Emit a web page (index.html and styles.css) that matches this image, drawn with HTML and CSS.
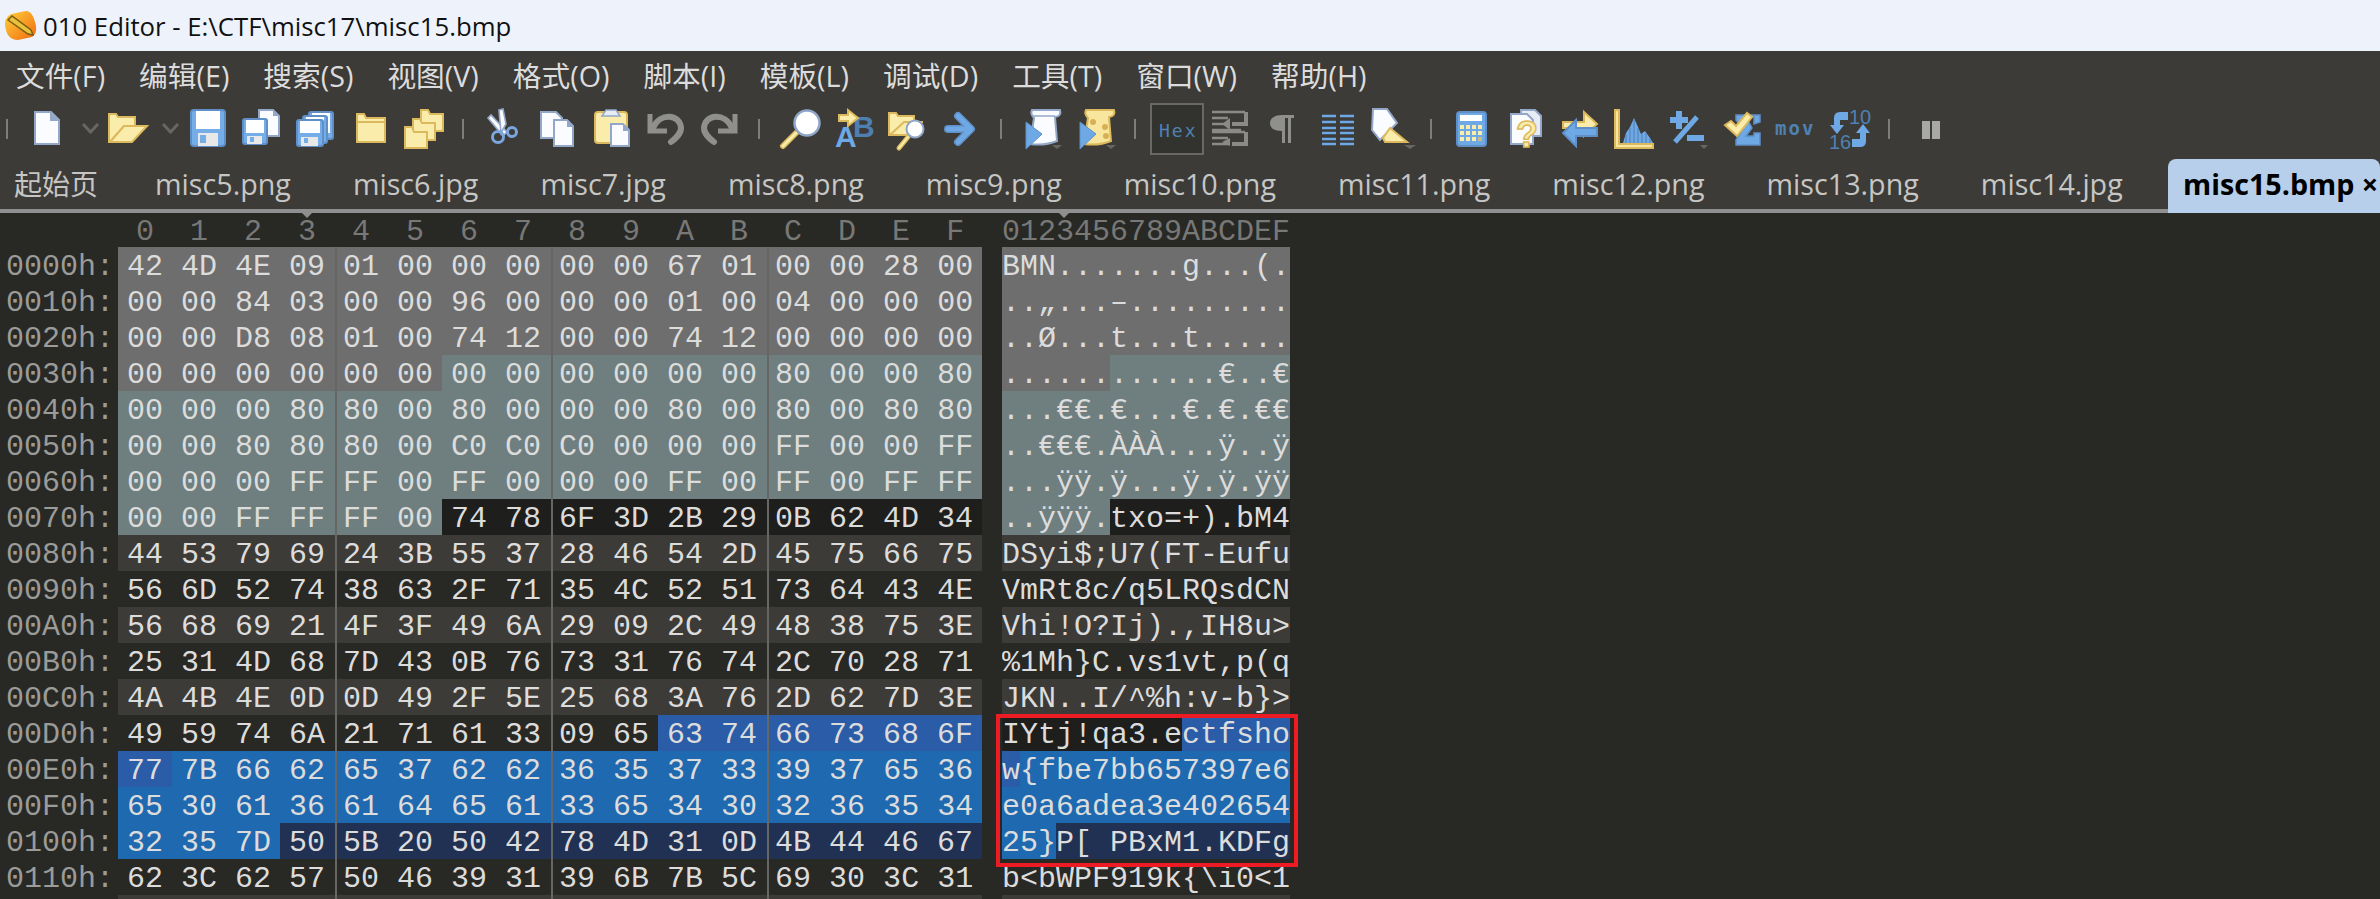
FILE: index.html
```html
<!DOCTYPE html>
<html lang="zh">
<head>
<meta charset="utf-8">
<title>010 Editor</title>
<link rel="stylesheet" href="styles.css">
</head>
<body>
<div class="app">
  <header class="titlebar">
    <svg class="logo" width="36" height="32" viewBox="0 0 36 32"><defs><linearGradient id="lg" x1="0" y1="0" x2="1" y2="1"><stop offset="0" stop-color="#ffd23c"/><stop offset="1" stop-color="#f06a10"/></linearGradient></defs><path d="M3 14 Q3 4 14 3 L24 1 Q31 1 34 16 Q35 24 30 27 L16 30 Q4 30 3 14Z" fill="url(#lg)"/><path d="M6 10 L26 24 L31 25 L29 20 L10 6Z" fill="#e8c23c" stroke="#7a5a10" stroke-width="1.4"/></svg>
    <span class="title-text">010 Editor - E:\CTF\misc17\misc15.bmp</span>
  </header>

  <nav class="menubar">
    <span>文件(F)</span><span>编辑(E)</span><span>搜索(S)</span><span>视图(V)</span><span>格式(O)</span><span>脚本(I)</span><span>模板(L)</span><span>调试(D)</span><span>工具(T)</span><span>窗口(W)</span><span>帮助(H)</span>
  </nav>

  <div class="toolbar">
    <svg width="20" height="52" viewBox="0 103 20 52"><rect x="6" y="119" width="2" height="20" fill="#7d7d7b"/></svg>
    <svg width="52" height="52" viewBox="20 103 52 52"><path d="M35 112H51L59 120V144H35Z" fill="#fbfcff" stroke="#93a8c8" stroke-width="2"/><path d="M50 112V121H59Z" fill="#93a8c8"/></svg>
    <svg width="32" height="52" viewBox="72 103 32 52"><path d="M83 124L90.500 132L98 124" fill="none" stroke="#666663" stroke-width="3"/></svg>
    <svg width="48" height="52" viewBox="104 103 48 52"><path d="M109 142V114H116L118 117H135V126H124L110 142Z" fill="#faedab" stroke="#dcb95c" stroke-width="2"/><path d="M110 142L124 126H147L132 142Z" fill="#faedab" stroke="#dcb95c" stroke-width="2"/></svg>
    <svg width="32" height="52" viewBox="152 103 32 52"><path d="M163 124L170.500 132L178 124" fill="none" stroke="#666663" stroke-width="3"/></svg>
    <svg width="48" height="52" viewBox="184 103 48 52"><rect x="191" y="110" width="34" height="36" rx="3" fill="#74ade8" stroke="#5f8fc6" stroke-width="2"/><rect x="196" y="111" width="24" height="18" fill="#fff"/><rect x="198" y="133" width="20" height="13" fill="#e8e8e8"/><rect x="200" y="135" width="6" height="8" fill="#74ade8"/></svg>
    <svg width="56" height="52" viewBox="232 103 56 52"><path d="M259 110H273L279 116V136H259Z" fill="#fbfcff" stroke="#93a8c8" stroke-width="2"/><path d="M273 110V116H279Z" fill="#93a8c8"/><rect x="243" y="119" width="24" height="25" rx="2" fill="#74ade8" stroke="#5f8fc6" stroke-width="2"/><rect x="246" y="120" width="18" height="13" fill="#fff"/><rect x="247" y="136" width="15" height="8" fill="#e8e8e8"/><rect x="250" y="137" width="4" height="5" fill="#74ade8"/></svg>
    <svg width="57" height="52" viewBox="288 103 57 52"><rect x="309" y="112" width="24" height="27" rx="2" fill="#74ade8" stroke="#5f8fc6" stroke-width="2"/><rect x="312" y="113" width="18" height="20" fill="#fff"/><rect x="303" y="116" width="24" height="27" rx="2" fill="#74ade8" stroke="#5f8fc6" stroke-width="2"/><rect x="306" y="117" width="18" height="20" fill="#fff"/><rect x="297" y="120" width="26" height="26" rx="2" fill="#74ade8" stroke="#5f8fc6" stroke-width="2"/><rect x="300" y="121" width="20" height="12" fill="#fff"/><rect x="301" y="137" width="17" height="9" fill="#e8e8e8"/><rect x="304" y="138" width="4" height="5" fill="#74ade8"/></svg>
    <svg width="50" height="52" viewBox="345 103 50 52"><path d="M357 142V114H364L366 118H385V142Z" fill="#faedab" stroke="#dcb95c" stroke-width="2"/><path d="M358 122H385" stroke="#dcb95c" stroke-width="2"/></svg>
    <svg width="57" height="52" viewBox="395 103 57 52"><path d="M421 110H428L430 114H443V131H421Z" fill="#faedab" stroke="#dcb95c" stroke-width="2"/><path d="M413 119H420L422 123H435V140H413Z" fill="#faedab" stroke="#dcb95c" stroke-width="2"/><path d="M405 127H412L414 132H427V148H405Z" fill="#faedab" stroke="#dcb95c" stroke-width="2"/></svg>
    <svg width="26" height="52" viewBox="452 103 26 52"><rect x="462" y="119" width="2" height="20" fill="#7d7d7b"/></svg>
    <svg width="54" height="52" viewBox="478 103 54 52"><path d="M488 118L491 115L507 132L503 136Z" fill="#fbfcff" stroke="#93a8c8" stroke-width="1.600"/><path d="M499 110L503 109L506 124L501 133Z" fill="#fbfcff" stroke="#93a8c8" stroke-width="1.600"/><circle cx="498" cy="137" r="5.500" fill="none" stroke="#7aa7de" stroke-width="3"/><circle cx="512" cy="132" r="4.500" fill="none" stroke="#7aa7de" stroke-width="3"/></svg>
    <svg width="53" height="52" viewBox="532 103 53 52"><path d="M541 112H556L562 118V138H541Z" fill="#fbfcff" stroke="#93a8c8" stroke-width="2"/><path d="M554 120H567L573 126V146H554Z" fill="#fbfcff" stroke="#93a8c8" stroke-width="2"/><path d="M567 120V127H573Z" fill="#93a8c8"/></svg>
    <svg width="55" height="52" viewBox="585 103 55 52"><rect x="595" y="112" width="32" height="31" rx="3" fill="#faedab" stroke="#dcb95c" stroke-width="2"/><path d="M602 116L606 110H616L620 116Z" fill="#e8ecf4" stroke="#93a8c8" stroke-width="1.500"/><path d="M611 124H623L629 130V146H611Z" fill="#fbfcff" stroke="#93a8c8" stroke-width="2"/><path d="M623 124V131H629Z" fill="#93a8c8"/></svg>
    <svg width="52" height="52" viewBox="640 103 52 52"><path d="M650 114V131H667" fill="none" stroke="#8f8f8b" stroke-width="5"/><path d="M653 128C660 112 680 114 681 128C681 134 676 138 671 142" fill="none" stroke="#8f8f8b" stroke-width="6" stroke-linecap="round"/></svg>
    <svg width="56" height="52" viewBox="692 103 56 52"><path d="M735 114V131H718" fill="none" stroke="#8f8f8b" stroke-width="5"/><path d="M732 128C725 112 705 114 704 128C704 134 709 138 714 142" fill="none" stroke="#8f8f8b" stroke-width="6" stroke-linecap="round"/></svg>
    <svg width="24" height="52" viewBox="748 103 24 52"><rect x="758" y="119" width="2" height="20" fill="#7d7d7b"/></svg>
    <svg width="56" height="52" viewBox="772 103 56 52"><path d="M783 146L796 133" stroke="#dcb95c" stroke-width="6" stroke-linecap="round"/><path d="M783 146L796 133" stroke="#faedab" stroke-width="3" stroke-linecap="round"/><circle cx="807" cy="123" r="12.500" fill="#fff" stroke="#8fa6c9" stroke-width="2.500"/></svg>
    <svg width="52" height="52" viewBox="828 103 52 52"><text x="853" y="137" class="svg-ab dark">B</text><text x="835" y="147" class="svg-ab">A</text><path d="M839 115H848V110L858 118L848 126V121H839Z" fill="#faedab" stroke="#dcb95c" stroke-width="2"/></svg>
    <svg width="54" height="52" viewBox="880 103 54 52"><path d="M889 135V113H896L898 116H914V135Z" fill="#faedab" stroke="#dcb95c" stroke-width="2"/><path d="M890 135L904 122H923" fill="none" stroke="#dcb95c" stroke-width="2"/><path d="M899 148L908 137" stroke="#dcb95c" stroke-width="5" stroke-linecap="round"/><path d="M899 148L908 137" stroke="#faedab" stroke-width="2" stroke-linecap="round"/><circle cx="915" cy="129" r="8.500" fill="#fff" stroke="#8fa6c9" stroke-width="2"/></svg>
    <svg width="56" height="52" viewBox="934 103 56 52"><path d="M948 129H970M958 116L971 129L958 142" fill="none" stroke="#5f8fc6" stroke-width="8" stroke-linecap="round" stroke-linejoin="round"/><path d="M948 129H970M958 116L971 129L958 142" fill="none" stroke="#6ea9e6" stroke-width="5" stroke-linecap="round" stroke-linejoin="round"/></svg>
    <svg width="22" height="52" viewBox="990 103 22 52"><rect x="1000" y="119" width="2" height="20" fill="#7d7d7b"/></svg>
    <svg width="58" height="52" viewBox="1012 103 58 52"><path d="M1032 110H1060Q1062 116 1055 117L1057 141Q1045 146 1030 144L1034 118Q1030 114 1032 110Z" fill="#fbfcff" stroke="#93a8c8" stroke-width="2"/><path d="M1033 116H1055" stroke="#93a8c8" stroke-width="1.500"/><path d="M1026 122L1042 134L1026 149Z" fill="#6ea9e6" stroke="#5f8fc6" stroke-width="1"/><path d="M1052 145H1062L1057 149Z" fill="#666663"/></svg>
    <svg width="55" height="52" viewBox="1070 103 55 52"><path d="M1086 110H1114Q1116 116 1109 117L1111 141Q1099 146 1084 144L1088 118Q1084 114 1086 110Z" fill="#f8e59e" stroke="#dcb95c" stroke-width="2"/><circle cx="1093" cy="122" r="3" fill="#d6b056"/><circle cx="1105" cy="127" r="3" fill="#d6b056"/><circle cx="1106" cy="136" r="3" fill="#d6b056"/><path d="M1080 122L1096 134L1080 149Z" fill="#6ea9e6" stroke="#5f8fc6" stroke-width="1"/><path d="M1106 145H1116L1111 149Z" fill="#666663"/></svg>
    <svg width="17" height="52" viewBox="1125 103 17 52"><rect x="1134" y="119" width="2" height="20" fill="#7d7d7b"/></svg>
    <svg width="66" height="52" viewBox="1142 103 66 52"><rect x="1151" y="104" width="52" height="50" fill="#32322f" stroke="#686865" stroke-width="2"/><text x="1159" y="137" class="svg-hex">Hex</text></svg>
    <svg width="52" height="52" viewBox="1208 103 52 52"><path d="M1212 112H1245M1212 118H1228M1212 124H1226M1212 130H1241M1212 132H1245M1212 138H1228M1212 144H1229" stroke="#8a8a86" stroke-width="2.500"/><path d="M1246 112V124H1232M1246 132V144H1232" fill="none" stroke="#8a8a86" stroke-width="4"/><path d="M1230 118V130L1222 124ZM1230 138V146L1222 142Z" fill="#8a8a86"/></svg>
    <svg width="50" height="52" viewBox="1260 103 50 52"><path d="M1282 115H1294V118H1291V143H1288V118H1285V143H1282V131C1274 131 1270 128 1270 123C1270 118 1275 115 1282 115Z" fill="#8f8f8b"/></svg>
    <svg width="52" height="52" viewBox="1310 103 52 52"><path d="M1322 116H1336M1340 116H1354M1322 122H1336M1340 122H1354M1322 128H1336M1340 128H1354M1322 133H1336M1340 133H1354M1322 139H1336M1340 139H1354M1322 144H1336M1340 144H1354" stroke="#6ea9e6" stroke-width="2.500"/></svg>
    <svg width="58" height="52" viewBox="1362 103 58 52"><path d="M1373 109H1387L1397 123L1380 140L1372 130Z" fill="#fbfcff" stroke="#93a8c8" stroke-width="2"/><path d="M1390 128L1407 142H1385L1383 138Z" fill="#faedab" stroke="#dcb95c" stroke-width="2"/><path d="M1404 145H1416L1410 149Z" fill="#666663"/></svg>
    <svg width="22" height="52" viewBox="1420 103 22 52"><rect x="1430" y="119" width="2" height="20" fill="#7d7d7b"/></svg>
    <svg width="58" height="52" viewBox="1442 103 58 52"><rect x="1457" y="112" width="29" height="34" rx="3" fill="#6ea9e6" stroke="#5f8fc6" stroke-width="2"/><rect x="1460" y="115" width="22" height="6" fill="#fff"/><path d="M1460 125h4v4h-4zM1466 125h4v4h-4zM1472 125h4v4h-4zM1478 125h4v4h-4zM1460 131h4v4h-4zM1466 131h4v4h-4zM1472 131h4v4h-4zM1478 131h4v4h-4zM1460 137h4v4h-4zM1466 137h4v4h-4zM1472 137h4v4h-4z" fill="#faedab"/><rect x="1478" y="137" width="4" height="4" fill="#c9bc85"/></svg>
    <svg width="52" height="52" viewBox="1500 103 52 52"><path d="M1521 110H1535L1541 116V136H1521Z" fill="#e8ecf4" stroke="#93a8c8" stroke-width="2"/><path d="M1511 114H1527L1533 120V144H1511Z" fill="#fbfcff" stroke="#93a8c8" stroke-width="2"/><text x="1516" y="147" class="svg-q">?</text></svg>
    <svg width="54" height="52" viewBox="1552 103 54 52"><path d="M1563 122H1584V112L1597 124L1584 136V128H1563Z" fill="#faedab" stroke="#dcb95c" stroke-width="2"/><path d="M1597 128V136H1576V146L1563 133L1576 120V128Z" fill="#6ea9e6" stroke="#5f8fc6" stroke-width="2"/></svg>
    <svg width="56" height="52" viewBox="1606 103 56 52"><path d="M1615 110V148H1653V144H1619V110Z" fill="#f8e59e" stroke="#dcb95c" stroke-width="2"/><path d="M1623 143L1626 133L1630 127L1634 118L1638 127L1641 134L1645 131L1650 138L1653 143Z" fill="#6ea9e6"/><path d="M1626 134V143M1630 128V143M1634 120V143M1638 128V143M1642 134V143M1646 133V143M1650 139V143" stroke="#4f7fb0" stroke-width="1"/></svg>
    <svg width="54" height="52" viewBox="1662 103 54 52"><path d="M1670 117H1676V111H1682V117H1688V123H1682V129H1676V123H1670Z" fill="#6ea9e6"/><path d="M1675 142L1697 117" stroke="#6ea9e6" stroke-width="5"/><rect x="1687" y="135" width="17" height="6" fill="#6ea9e6"/><path d="M1700 145H1708L1704 149Z" fill="#666663"/></svg>
    <svg width="52" height="52" viewBox="1716 103 52 52"><path d="M1736 115H1760V122L1754 124V117H1746L1752 128L1746 136H1754V133H1760V145H1736V140L1743 129L1736 120Z" fill="#6ea9e6" stroke="#5f8fc6" stroke-width="1.500"/><path d="M1725 125L1731 121L1736 126L1747 113L1752 117L1737 136Z" fill="#faedab" stroke="#dcb95c" stroke-width="2"/></svg>
    <svg width="52" height="52" viewBox="1768 103 52 52"><text x="1775" y="135" class="svg-mov">mov</text></svg>
    <svg width="60" height="52" viewBox="1820 103 60 52"><text x="1849" y="124" class="svg-num">10</text><text x="1829" y="149" class="svg-num">16</text><path d="M1848 112V120H1840V125H1844L1837 134L1830 125H1834V118Q1834 112 1840 112Z" fill="#6ea9e6"/><path d="M1852 147V139H1860V133H1856L1863 124L1870 133H1866V141Q1866 147 1860 147Z" fill="#6ea9e6"/></svg>
    <svg width="20" height="52" viewBox="1880 103 20 52"><rect x="1888" y="119" width="2" height="20" fill="#7d7d7b"/></svg>
    <svg width="50" height="52" viewBox="1900 103 50 52"><rect x="1922" y="121" width="8" height="18" fill="#a8a8a5"/><rect x="1932" y="121" width="8" height="18" fill="#a8a8a5"/></svg>
  </div>

  <div class="tabs">
    <span class="tab first">起始页</span><span class="tab">misc5.png</span><span class="tab">misc6.jpg</span><span class="tab">misc7.jpg</span><span class="tab">misc8.png</span><span class="tab">misc9.png</span><span class="tab">misc10.png</span><span class="tab">misc11.png</span><span class="tab">misc12.png</span><span class="tab">misc13.png</span><span class="tab">misc14.jpg</span><span class="tab active">misc15.bmp ×</span>
  </div>

  <main class="editor">
    <i class="caret hexcaret"></i><i class="caret asccaret"></i>
    <i class="gsep g1"></i><i class="gsep g2"></i><i class="gsep g3"></i>
    <div class="redbox"></div>
    <div class="row head"><span class="addr"></span><span class="hex">0  1  2  3  4  5  6  7  8  9  A  B  C  D  E  F </span><span class="asc">0123456789ABCDEF</span></div>
    <div class="row"><span class="addr">0000h:</span><span class="hex"><b class="g">42 4D 4E 09 01 00 00 00 00 00 67 01 00 00 28 00</b></span><span class="asc"><b class="g">BMN.......g...(.</b></span></div>
    <div class="row"><span class="addr">0010h:</span><span class="hex"><b class="g">00 00 84 03 00 00 96 00 00 00 01 00 04 00 00 00</b></span><span class="asc"><b class="g">..„...–.........</b></span></div>
    <div class="row"><span class="addr">0020h:</span><span class="hex"><b class="g">00 00 D8 08 01 00 74 12 00 00 74 12 00 00 00 00</b></span><span class="asc"><b class="g">..Ø...t...t.....</b></span></div>
    <div class="row"><span class="addr">0030h:</span><span class="hex"><b class="g">00 00 00 00 00 00</b><b class="t">00 00 00 00 00 00 80 00 00 80</b></span><span class="asc"><b class="g">......</b><b class="t">......€..€</b></span></div>
    <div class="row"><span class="addr">0040h:</span><span class="hex"><b class="t">00 00 00 80 80 00 80 00 00 00 80 00 80 00 80 80</b></span><span class="asc"><b class="t">...€€.€...€.€.€€</b></span></div>
    <div class="row"><span class="addr">0050h:</span><span class="hex"><b class="t">00 00 80 80 80 00 C0 C0 C0 00 00 00 FF 00 00 FF</b></span><span class="asc"><b class="t">..€€€.ÀÀÀ...ÿ..ÿ</b></span></div>
    <div class="row"><span class="addr">0060h:</span><span class="hex"><b class="t">00 00 00 FF FF 00 FF 00 00 00 FF 00 FF 00 FF FF</b></span><span class="asc"><b class="t">...ÿÿ.ÿ...ÿ.ÿ.ÿÿ</b></span></div>
    <div class="row"><span class="addr">0070h:</span><span class="hex"><b class="t">00 00 FF FF FF 00</b><b class="k">74 78 6F 3D 2B 29 0B 62 4D 34</b></span><span class="asc"><b class="t">..ÿÿÿ.</b><b class="k">txo=+).bM4</b></span></div>
    <div class="row"><span class="addr">0080h:</span><span class="hex"><b class="s">44 53 79 69 24 3B 55 37 28 46 54 2D 45 75 66 75</b></span><span class="asc"><b class="s">DSyi$;U7(FT-Eufu</b></span></div>
    <div class="row"><span class="addr">0090h:</span><span class="hex"><b>56 6D 52 74 38 63 2F 71 35 4C 52 51 73 64 43 4E</b></span><span class="asc"><b>VmRt8c/q5LRQsdCN</b></span></div>
    <div class="row"><span class="addr">00A0h:</span><span class="hex"><b class="s">56 68 69 21 4F 3F 49 6A 29 09 2C 49 48 38 75 3E</b></span><span class="asc"><b class="s">Vhi!O?Ij).,IH8u&gt;</b></span></div>
    <div class="row"><span class="addr">00B0h:</span><span class="hex"><b>25 31 4D 68 7D 43 0B 76 73 31 76 74 2C 70 28 71</b></span><span class="asc"><b>%1Mh}C.vs1vt,p(q</b></span></div>
    <div class="row"><span class="addr">00C0h:</span><span class="hex"><b class="s">4A 4B 4E 0D 0D 49 2F 5E 25 68 3A 76 2D 62 7D 3E</b></span><span class="asc"><b class="s">JKN..I/^%h:v-b}&gt;</b></span></div>
    <div class="row"><span class="addr">00D0h:</span><span class="hex"><b>49 59 74 6A 21 71 61 33 09 65</b><b class="c">63 74 66 73 68 6F</b></span><span class="asc"><b class="k">IYtj!qa3.e</b><b class="c">ctfsho</b></span></div>
    <div class="row"><span class="addr">00E0h:</span><span class="hex"><b class="c">77</b><b class="b">7B 66 62 65 37 62 62 36 35 37 33 39 37 65 36</b></span><span class="asc"><b class="c">w</b><b class="b">{fbe7bb657397e6</b></span></div>
    <div class="row"><span class="addr">00F0h:</span><span class="hex"><b class="b">65 30 61 36 61 64 65 61 33 65 34 30 32 36 35 34</b></span><span class="asc"><b class="b">e0a6adea3e402654</b></span></div>
    <div class="row"><span class="addr">0100h:</span><span class="hex"><b class="b">32 35 7D</b><b class="n">50 5B 20 50 42 78 4D 31 0D 4B 44 46 67</b></span><span class="asc"><b class="b">25}</b><b class="n">P[ PBxM1.KDFg</b></span></div>
    <div class="row"><span class="addr">0110h:</span><span class="hex"><b>62 3C 62 57 50 46 39 31 39 6B 7B 5C 69 30 3C 31</b></span><span class="asc"><b>b&lt;bWPF919k{\i0&lt;1</b></span></div>
    <div class="row"><span class="addr"></span><span class="hex"><b class="s fill">&nbsp;</b></span><span class="asc"><b class="s fill">&nbsp;</b></span></div>
  </main>
</div>
</body>
</html>
```
FILE: styles.css
```css
* { box-sizing: border-box; }
html, body { margin: 0; height: 100%; overflow: hidden; background: #282825; }
.app { display: flex; flex-direction: column; height: 899px; overflow: hidden; font-family: "Open Sans", "Noto Sans CJK SC", sans-serif; }

.titlebar { height: 51px; background: #eef3fb; display: flex; align-items: center; padding-left: 2px; gap: 5px; flex: none; }
.title-text { font-size: 25.750px; color: #111; white-space: nowrap; }
.logo { flex: none; }

.menubar { height: 52px; background: #3c3b37; display: flex; align-items: center; gap: 34px; padding: 0 0 6px 16px; flex: none; color: #dcdcdc; font-size: 28.700px; }
.menubar span { white-space: nowrap; }

.toolbar { height: 52px; background: #3c3b37; display: flex; flex: none; }
.toolbar svg { flex: none; display: block; }
.svg-ab { font: bold 30px "Liberation Sans", sans-serif; fill: #6ea9e6; }
.svg-ab.dark { fill: #4f7fb0; }
.svg-hex { font: 18px "DejaVu Sans Mono", monospace; letter-spacing: 2px; fill: #4f81b3; }
.svg-q { font: bold 36px "Liberation Sans", sans-serif; fill: #faedab; stroke: #dcb95c; stroke-width: 1.500px; }
.svg-mov { font: bold 19px "DejaVu Sans Mono", monospace; letter-spacing: 2px; fill: #4f81b3; }
.svg-num { font: 20px "Liberation Sans", sans-serif; fill: #4f81b3; }

.tabs { height: 58px; background: #3c3b37; box-shadow: inset 0 -4px 0 #8f8f8f; display: flex; align-items: flex-end; padding-left: 14px; flex: none; }
.tab { font-size: 28.700px; color: #c6c6c4; padding: 0 31px; height: 54px; line-height: 50px; white-space: nowrap; }
.tab.first { padding: 0 26px 0 0; font-size: 28px; }
.tab.active { margin-left: auto; padding: 0 0 0 15px; width: 212px; background: #b7cfea; color: #000; font-weight: 700; border-radius: 8px 8px 0 0; }

.editor { position: relative; flex: 1; background: #282825; overflow: hidden; }
.row { display: flex; height: 36px; font: 30px/41px "Liberation Mono", monospace; color: #dcdcdc; white-space: pre; }
.row.head { height: 34px; color: #787876; line-height: 39px; }
.addr { width: 118px; padding-left: 6px; color: #9b9b98; flex: none; }
.hex { width: 864px; margin-right: 20px; display: flex; flex: none; }
.head .hex { padding-left: 18px; }
.hex b { padding: 0 9px; }
.asc { width: 288px; display: flex; flex: none; }
b { font-weight: 400; display: block; height: 36px; overflow: hidden; }
.fill { flex: 1; }
.g { background: #6e6e6e; }
.t { background: #6f7f7f; }
.k { background: #1e1e1c; }
.s { background: #3c3b38; }
.b { background: #1f69b0; }
.c { background: #2a5ca8; }
.n { background: #213153; }

.gsep { position: absolute; top: 34px; bottom: 0; width: 2px; background: #666664; z-index: 1; }
.g1 { left: 335px; }
.g2 { left: 551px; }
.g3 { left: 767px; }
.caret { position: absolute; top: 0; width: 0; height: 0; border: 5px solid transparent; border-top: 5px solid #8f8f8f; z-index: 2; }
.hexcaret { left: 302px; }
.asccaret { left: 1059px; }
.redbox { position: absolute; left: 996px; top: 501px; width: 302px; height: 153px; border: 4px solid #ed1c24; z-index: 3; }
```
